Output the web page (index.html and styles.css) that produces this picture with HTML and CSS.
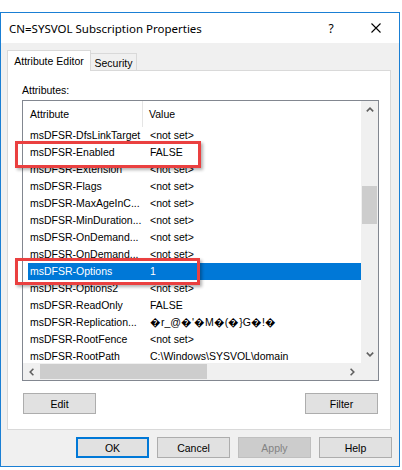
FILE: index.html
```
<!DOCTYPE html>
<html>
<head>
<meta charset="utf-8">
<title>CN=SYSVOL Subscription Properties</title>
<link rel="stylesheet" href="styles.css">
</head>
<body>
<div class="window">
  <div class="titlebar">
    <span class="title">CN=SYSVOL Subscription Properties</span>
    <span class="help">?</span>
    <svg class="close" width="10" height="10" viewBox="0 0 10 10"><path d="M0.5 0.5L9.5 9.5M9.5 0.5L0.5 9.5" stroke="#000" stroke-width="1.1" fill="none"/></svg>
  </div>
  <div class="client">
    <div class="tabs">
      <div class="tab active">Attribute Editor</div>
      <div class="tab">Security</div>
    </div>
    <div class="panel">
      <div class="label">Attributes:</div>
      <div class="list">
        <div class="list-main">
          <div class="header">
            <div class="hcell c1">Attribute</div>
            <div class="hcell c2">Value</div>
          </div>
          <div class="rows">
            <div class="row"><span class="c1">msDFSR-DfsLinkTarget</span><span class="c2">&lt;not set&gt;</span></div>
            <div class="row"><span class="c1">msDFSR-Enabled</span><span class="c2">FALSE</span></div>
            <div class="row"><span class="c1">msDFSR-Extension</span><span class="c2">&lt;not set&gt;</span></div>
            <div class="row"><span class="c1">msDFSR-Flags</span><span class="c2">&lt;not set&gt;</span></div>
            <div class="row"><span class="c1">msDFSR-MaxAgeInC...</span><span class="c2">&lt;not set&gt;</span></div>
            <div class="row"><span class="c1">msDFSR-MinDuration...</span><span class="c2">&lt;not set&gt;</span></div>
            <div class="row"><span class="c1">msDFSR-OnDemand...</span><span class="c2">&lt;not set&gt;</span></div>
            <div class="row"><span class="c1">msDFSR-OnDemand...</span><span class="c2">&lt;not set&gt;</span></div>
            <div class="row selected"><span class="c1">msDFSR-Options</span><span class="c2">1</span></div>
            <div class="row"><span class="c1">msDFSR-Options2</span><span class="c2">&lt;not set&gt;</span></div>
            <div class="row"><span class="c1">msDFSR-ReadOnly</span><span class="c2">FALSE</span></div>
            <div class="row"><span class="c1">msDFSR-Replication...</span><span class="c2">&#xFFFD;r_@&#xFFFD;'&#xFFFD;M&#xFFFD;(&#xFFFD;}G&#xFFFD;!&#xFFFD;</span></div>
            <div class="row"><span class="c1">msDFSR-RootFence</span><span class="c2">&lt;not set&gt;</span></div>
            <div class="row"><span class="c1">msDFSR-RootPath</span><span class="c2">C:\Windows\SYSVOL\domain</span></div>
          </div>
        </div>
        <div class="vscroll">
          <div class="arrow"><svg width="8" height="5" viewBox="0 0 8 5"><polyline points="0.8,4.4 4,1.2 7.2,4.4" fill="none" stroke="#606060" stroke-width="1.6"/></svg></div>
          <div class="vtrack"><div class="vthumb"></div></div>
          <div class="arrow"><svg width="8" height="5" viewBox="0 0 8 5"><polyline points="0.8,0.6 4,3.8 7.2,0.6" fill="none" stroke="#606060" stroke-width="1.6"/></svg></div>
        </div>
        <div class="hscroll">
          <div class="arrow"><svg width="5" height="8" viewBox="0 0 5 8"><polyline points="4.4,0.8 1.2,4 4.4,7.2" fill="none" stroke="#606060" stroke-width="1.6"/></svg></div>
          <div class="htrack"><div class="hthumb"></div></div>
          <div class="arrow"><svg width="5" height="8" viewBox="0 0 5 8"><polyline points="0.6,0.8 3.8,4 0.6,7.2" fill="none" stroke="#606060" stroke-width="1.6"/></svg></div>
        </div>
        <div class="corner"></div>
      </div>
      <div class="panel-buttons">
        <button class="btn">Edit</button>
        <button class="btn">Filter</button>
      </div>
    </div>
    <div class="dialog-buttons">
      <button class="btn default">OK</button>
      <button class="btn">Cancel</button>
      <button class="btn disabled">Apply</button>
      <button class="btn">Help</button>
    </div>
  </div>
  <div class="callout callout-enabled"></div>
  <div class="callout callout-options"></div>
</div>
</body>
</html>
```
FILE: styles.css
```
html, body {
  margin: 0;
  padding: 0;
  background: #ffffff;
}

body {
  font-family: "Liberation Sans", Arial, sans-serif;
  font-size: 10.5px;
  color: #000;
}

.window {
  position: relative;
  margin-top: 12px;
  width: 400px;
  height: 455px;
  box-sizing: border-box;
  border: 1px solid #1a7fd4;
  background: #f0f0f0;
  display: flex;
  flex-direction: column;
}

.titlebar {
  height: 30px;
  background: #ffffff;
  display: flex;
  align-items: center;
  padding-left: 8px;
  flex-shrink: 0;
}

.title {
  flex: 1;
  font-family: "Noto Sans", "Open Sans", sans-serif;
  font-size: 11.5px;
  color: #000;
  white-space: nowrap;
}

.help {
  font-family: "Noto Sans", sans-serif;
  font-size: 12px;
  width: 10px;
  text-align: center;
  margin-right: 35px;
}

.close {
  margin-right: 18px;
  display: block;
}

.client {
  flex: 1;
  padding: 7px 8px 8px 6px;
  display: flex;
  flex-direction: column;
}

.tabs {
  height: 20px;
  display: flex;
  align-items: flex-end;
  position: relative;
  z-index: 1;
}

.tab {
  box-sizing: border-box;
  height: 17px;
  border: 1px solid #d9d9d9;
  border-bottom: none;
  border-left: none;
  background: #f0f0f0;
  display: flex;
  align-items: center;
  justify-content: center;
  width: 46px;
  padding-top: 1px;
}

.tab.active {
  width: 84px;
  height: 21px;
  margin-bottom: -1px;
  background: #ffffff;
  border-left: 1px solid #d9d9d9;
  padding-top: 0;
}

.panel {
  box-sizing: border-box;
  height: 360px;
  border: 1px solid #d9d9d9;
  background: #ffffff;
  padding: 13px 11px 15px 14px;
  display: flex;
  flex-direction: column;
}

.label {
  height: 13px;
  line-height: 13px;
  margin-bottom: 3px;
}

.list {
  box-sizing: border-box;
  height: 281px;
  border: 1px solid #828790;
  display: grid;
  grid-template-columns: 1fr 17px;
  grid-template-rows: 1fr 17px;
  overflow: hidden;
}

.list-main {
  overflow: hidden;
  min-height: 0;
}

.header {
  height: 26px;
  display: flex;
  align-items: stretch;
}

.hcell {
  display: flex;
  align-items: center;
}

.hcell.c1 {
  width: 120px;
  box-sizing: border-box;
  padding-left: 7px;
  border-right: 1px solid #e5e5e5;
}

.hcell.c2 {
  padding-left: 6px;
}

.rows {
  display: flex;
  flex-direction: column;
}

.row {
  height: 17px;
  line-height: 17px;
  margin-left: 5px;
  display: flex;
  white-space: nowrap;
}

.row .c1 {
  width: 115px;
  flex-shrink: 0;
  padding-left: 2px;
  box-sizing: border-box;
}

.row .c2 {
  padding-left: 7px;
}

.row.selected {
  background: #0078d7;
  color: #ffffff;
}

.vscroll {
  background: #f0f0f0;
  display: flex;
  flex-direction: column;
}

.vscroll .arrow {
  height: 17px;
  display: flex;
  align-items: center;
  justify-content: center;
}

.vtrack {
  flex: 1;
  position: relative;
}

.vthumb {
  margin: 68px 1px 0 1px;
  height: 38px;
  background: #cdcdcd;
}

.hscroll {
  background: #f0f0f0;
  display: flex;
}

.hscroll .arrow {
  width: 17px;
  display: flex;
  align-items: center;
  justify-content: center;
}

.htrack {
  flex: 1;
  display: flex;
  padding: 1px 0;
}

.hthumb {
  width: 167px;
  background: #cdcdcd;
}

.corner {
  background: #f0f0f0;
}

.panel-buttons {
  margin-top: 12px;
  display: flex;
  justify-content: space-between;
  padding-left: 1px;
  padding-right: 1px;
}

.btn {
  box-sizing: border-box;
  width: 73px;
  height: 21px;
  margin: 0;
  padding: 0;
  border: 1px solid #adadad;
  background: #e1e1e1;
  font-family: "Liberation Sans", Arial, sans-serif;
  font-size: 10.5px;
  color: #000;
}

.btn.default {
  border: 2px solid #0078d7;
}

.btn.disabled {
  background: #cccccc;
  border-color: #bfbfbf;
  color: #838383;
}

.dialog-buttons {
  margin-top: 7px;
  display: flex;
  justify-content: flex-end;
  gap: 8px;
  margin-right: -1px;
}

.callout {
  position: absolute;
  box-sizing: border-box;
  border: 3px solid #ea4040;
  box-shadow: 2px 2px 3px rgba(0, 0, 0, 0.3);
  left: 14px;
  height: 27px;
}

.callout-enabled {
  top: 128px;
  width: 186px;
}

.callout-options {
  top: 245px;
  width: 185px;
}
```
